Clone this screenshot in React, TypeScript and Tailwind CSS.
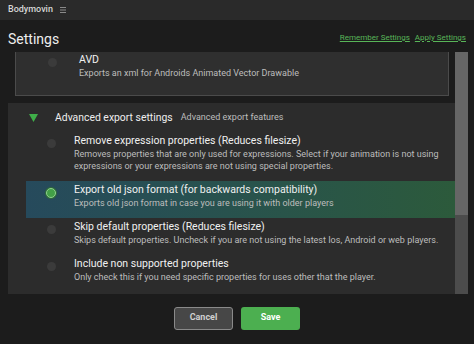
import { useState } from "react"

const options = [
    {
        title: 'Remove expression properties (Reduces filesize)',
        description: 'Removes properties that are only used for expressions. Select if your animation is not using expressions or your expressions are not using special properties.',
    },
    {
        title: 'Export old json format (for backwards compatibility)',
        description: 'Exports old json format in case you are using it with older players',
    },
    {
        title: 'Skip default properties (Reduces filesize)',
        description: 'Skips default properties. Uncheck if you are not using the latest Ios, Android or web players.',
    },
    {
        title: 'Include non supported properties',
        description: 'Only check this if you need specific properties for uses other that the player.',
    },
]

const Radio = ({ checked }: { checked: boolean }) => {
    return checked ? (
        <span className="block size-[10px] rounded-full border border-[#8fd08f] bg-[#43a047] shadow-[0_0_0_1px_#2f6b3a]" />
    ) : (
        <span className="block size-[9px] rounded-full bg-[#3b3b3b]" />
    )
}

const App = () => {
    const [selected, setSelected] = useState<number>(1)

    return (
        <div className="w-[474px] h-[344px] bg-[#1c1c1c] flex flex-col overflow-hidden font-['Roboto',sans-serif]">
            <div className="h-[20px] bg-[#2a2a2a] flex items-center px-[8px] gap-[7px]">
                <span className="text-[9px] font-medium text-[#d6d6d6]">Bodymovin</span>
                <svg width="6" height="6" viewBox="0 0 6 6" className="text-[#8a8a8a]">
                    <path d="M0 0.5h6M0 3h6M0 5.5h6" stroke="currentColor" strokeWidth="1" />
                </svg>
            </div>

            <div className="h-[32px] flex items-end justify-between pl-[8px] pr-[8px] pb-[3px]">
                <h1 className="text-[14px] leading-[20px] text-[#eeeeee]">Settings</h1>
                <div className="flex gap-[5px] text-[8px] text-[#58b558] underline mb-[5px]">
                    <span>Remember Settings</span>
                    <span>Apply Settings</span>
                </div>
            </div>

            <div className="h-[242px] flex pl-[8px]">
                <div className="w-[447px] overflow-hidden flex flex-col">
                    <div className="flex-none ml-[7px] mr-[6px] border border-t-0 border-[#4b4b4b] bg-[#2f2f2f] pt-[1px] pb-[16px] flex">
                        <div className="w-[63px] flex justify-center pl-[10px] pt-[5px]">
                            <Radio checked={false} />
                        </div>
                        <div>
                            <p className="text-[10.5px] leading-[14px] text-[#f0f0f0]">AVD</p>
                            <p className="text-[9px] leading-[12px] text-[#bdbdbd]">Exports an xml for Androids Animated Vector Drawable</p>
                        </div>
                    </div>

                    <div className="mt-[7px] flex-1 bg-[#2c2c2c]">
                        <div className="flex items-center pt-[7px] pb-[6px] h-[29px]">
                            <div className="w-[47px] flex justify-center pl-[4px]">
                                <svg width="9" height="8" viewBox="0 0 9 8">
                                    <path d="M0 0h9L4.5 8z" fill="#3fae49" />
                                </svg>
                            </div>
                            <span className="text-[10.4px] text-[#eeeeee]">Advanced export settings</span>
                            <span className="ml-[8px] text-[9px] text-[#bdbdbd]">Advanced export features</span>
                        </div>

                        {options.map((item, index) => (
                            <div
                                key={index}
                                onClick={() => setSelected(index)}
                                className={`ml-[18px] flex pt-[2px] pb-[9px] cursor-pointer ${selected === index ? 'bg-gradient-to-r from-[#264a5c] to-[#2c5a3b]' : ''}`}
                            >
                                <div className="w-[48px] flex justify-center pl-[2px] pt-[5px]">
                                    <Radio checked={selected === index} />
                                </div>
                                <div className="flex-1 pr-[8px]">
                                    <p className="text-[10.5px] leading-[14px] text-[#f0f0f0]">{item.title}</p>
                                    <p className="text-[9px] leading-[12px] text-[#bdbdbd]">{item.description}</p>
                                </div>
                            </div>
                        ))}
                    </div>
                </div>

                <div className="w-[13px] bg-[#4c4c4c] flex flex-col">
                    <div className="h-[163px] bg-[#666666]" />
                </div>
            </div>

            <div className="flex-1 flex items-center justify-center gap-[8px] pb-[2px]">
                <button className="w-[59px] h-[23px] rounded-[3px] border border-[#8a8a8a] bg-[#474747] text-[9px] font-bold text-[#cfcfcf]">
                    Cancel
                </button>
                <button className="w-[59px] h-[23px] rounded-[3px] bg-[#4caf50] text-[9px] font-bold text-white">
                    Save
                </button>
            </div>
        </div>
    )
}

export default App
